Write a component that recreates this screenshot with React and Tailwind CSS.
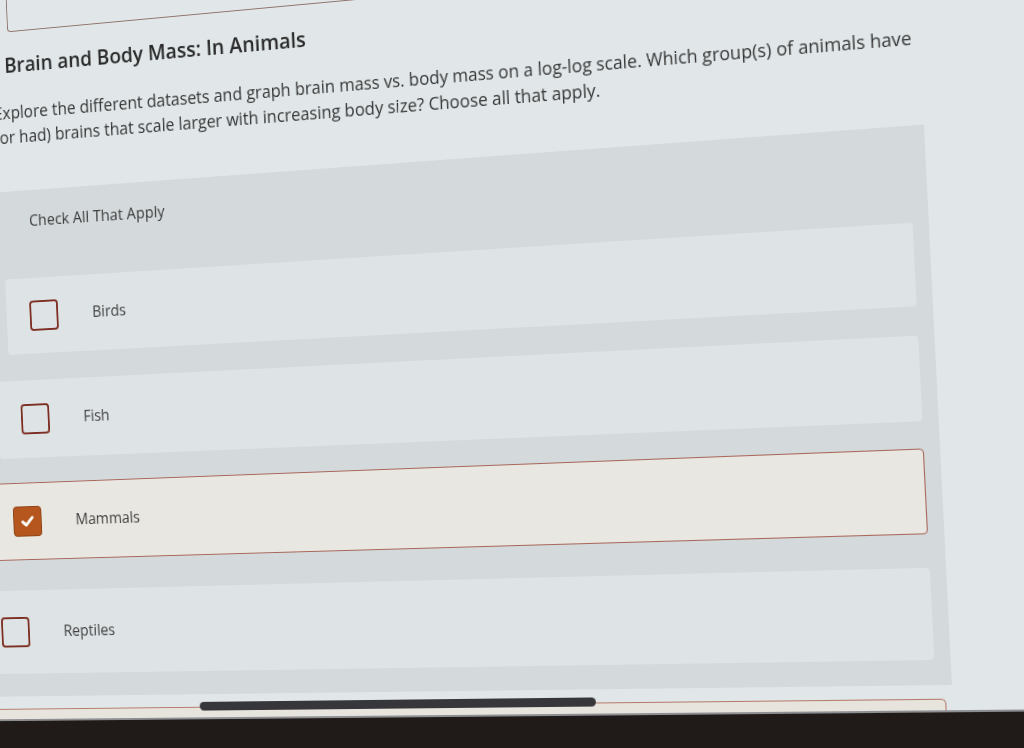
import React from 'react';

const options = [
  { label: 'Birds', checked: false, card: 'mt-[29px] h-[80px] ml-[76px]' },
  { label: 'Fish', checked: false, card: 'mt-[28px] h-[82px] ml-[61px]' },
  { label: 'Mammals', checked: true, card: 'mt-[26px] h-[82px] ml-[46px]' },
  { label: 'Reptiles', checked: false, card: 'mt-[32px] h-[88px] ml-[28px]' },
];

function Checkbox({ checked }) {
  if (checked) {
    return (
      <div className="w-[32px] h-[32px] shrink-0 rounded-[4px] bg-[#b4561e] border border-[#8e4216] flex items-center justify-center">
        <svg width="18" height="18" viewBox="0 0 18 18" fill="none">
          <polyline points="3.5,9.5 7.5,13 14.5,5" stroke="#ffffff" strokeWidth="3" strokeLinecap="round" strokeLinejoin="round" />
        </svg>
      </div>
    );
  }
  return <div className="w-[32px] h-[32px] shrink-0 rounded-[4px] border-2 border-[#7d2e22]" />;
}

export default function App() {
  return (
    <div className="w-[1024px] h-[748px] overflow-hidden bg-[#e1e7e9]" style={{ fontFamily: '"Open Sans", "Noto Sans", Arial, sans-serif' }}>
      <div className="relative w-[1224px] h-[900px] -ml-[100px] -mt-[80px] flex flex-col bg-[#e1e7e9] origin-[612px_454px] [transform:perspective(1000px)_rotateY(-6.5deg)_rotate(-2.75deg)]">
        {/* bottom of previous block */}
        <div className="ml-[91px] h-[66px] w-[900px] shrink-0 border-l border-b border-[#8f736b] rounded-bl-[4px]" />

        <h1 className="ml-[86px] mt-[22px] text-[21px] leading-[26px] font-semibold text-[#2a2a2a] whitespace-nowrap">
          Brain and Body Mass: In Animals
        </h1>

        <p className="ml-[72px] mt-[25px] text-[17.3px] leading-[26px] text-[#353535] whitespace-nowrap">
          Explore the different datasets and graph brain mass vs. body mass on a log-log scale. Which group(s) of animals have
          <br />
          (or had) brains that scale larger with increasing body size? Choose all that apply.
        </p>

        <div className="mt-[44px] w-[1019px] shrink-0 bg-[#d4d9db] pb-[24px]">
          <div className="h-[64px] flex items-center pl-[106px] text-[16px] text-[#3b3b3b]">Check All That Apply</div>
          {options.map((o) => (
            <div
              key={o.label}
              className={
                o.card +
                ' mr-[15px] flex items-center gap-[38px] pl-[26px] rounded-[4px] ' +
                (o.checked ? 'bg-[#e9e7e1] border border-[#a8665a]' : 'bg-[#dee3e5]')
              }
            >
              <Checkbox checked={o.checked} />
              <span className="text-[15.5px] text-[#3f3f3f]">{o.label}</span>
            </div>
          ))}
        </div>

        {/* top of next block */}
        <div className="mt-[13px] h-[11px] w-[1013px] shrink-0 bg-[#e7e4de] border-t border-r border-[#b47a6a] rounded-tr-[5px]" />

        {/* screen bezel */}
        <div className="flex-1 bg-[#201b18] border-t-2 border-[#8e8f92]" />

        {/* dark bar lying over the bottom edge */}
        <div className="absolute left-[270px] top-[778px] w-[410px] h-[9px] rounded-full bg-[#37373b]" />
      </div>
    </div>
  );
}
